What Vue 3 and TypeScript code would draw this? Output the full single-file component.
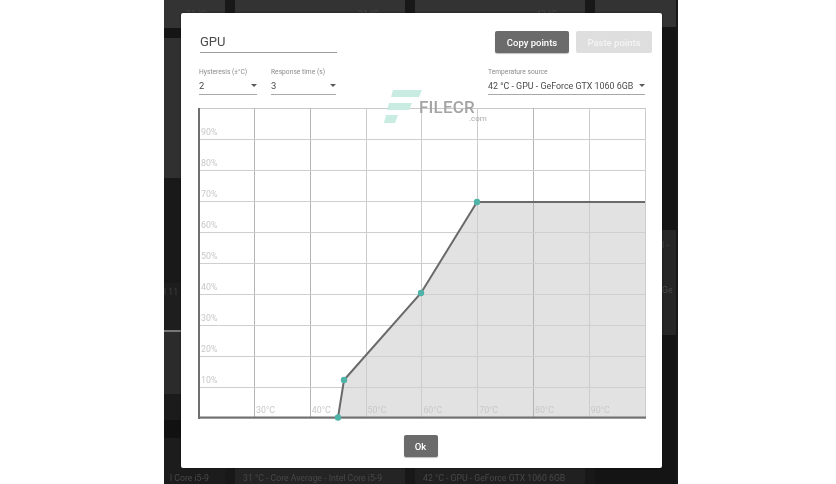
<script setup lang="ts">
interface Band { h: number; c: string; t?: string }
const cols: { w: number; bands: Band[]; cls: string }[] = [
  { w: 61, cls: 'c1', bands: [
    { h: 28, c: '#333333', t: '31 °C' }, { h: 10, c: '#151515' }, { h: 140, c: '#303030' },
    { h: 105, c: '#191919' }, { h: 47, c: '#1e1e1e', t: 'l 11' }, { h: 2, c: '#777777' },
    { h: 62, c: '#2b2b2b' }, { h: 26, c: '#1b1b1b' }, { h: 18, c: '#111111' }, { h: 46, c: '#1c1c1c', t: 'l Core i5-9' }
  ] },
  { w: 170, cls: 'c2', bands: [
    { h: 28, c: '#333333', t: '31 °C' }, { h: 428, c: '#2a2a2a' }, { h: 28, c: '#242424', t: '31 °C - Core Average - Intel Core i5-9' }
  ] },
  { w: 170, cls: 'c3', bands: [
    { h: 28, c: '#333333', t: '42 °C' }, { h: 428, c: '#2a2a2a' }, { h: 28, c: '#202020', t: '42 °C - GPU - GeForce GTX 1060 6GB' }
  ] },
  { w: 81, cls: 'c4', bands: [
    { h: 27, c: '#333333' }, { h: 203, c: '#151515' }, { h: 40, c: '#262626', t: 'l -' }, { h: 65, c: '#262626', t: 'Ge' }, { h: 149, c: '#141414' }
  ] }
]

const fields = [
  { label: 'Hysteresis (±°C)', value: '2', cls: 'f-hyst' },
  { label: 'Response time (s)', value: '3', cls: 'f-resp' }
]

const xs = [56, 112, 168, 223, 279, 335, 391, 447]
const ys = [31, 62, 93, 124, 155, 186, 217, 248, 279]
const darkX = [56, 112, 335]
const yLabels = [90, 80, 70, 60, 50, 40, 30, 20, 10]
const xLabels = [30, 40, 50, 60, 70, 80, 90]
const points: [number, number][] = [[140, 309.5], [146, 272], [223, 185], [279, 94]]
const curve = [...points, [447, 94] as [number, number]]
const linePts = curve.map(p => p.join(',')).join(' ')
const fillPts = linePts + ' 447,309.5'
</script>

<template>
  <div class="page">
    <div class="backdrop">
      <div v-for="col in cols" :key="col.cls" class="col" :class="col.cls" :style="{ width: col.w + 'px' }">
        <div v-for="(b, i) in col.bands" :key="i" class="band" :style="{ height: b.h + 'px', background: b.c }">
          <span v-if="b.t" class="band-text">{{ b.t }}</span>
        </div>
      </div>
    </div>

    <section class="modal">
      <header class="head">
        <div class="title">GPU</div>
        <div class="actions">
          <button class="btn">Copy points</button>
          <button class="btn disabled">Paste points</button>
        </div>
      </header>

      <div class="fields">
        <div v-for="f in fields" :key="f.cls" class="field" :class="f.cls">
          <label>{{ f.label }}</label>
          <div class="select"><span>{{ f.value }}</span><i class="arrow"></i></div>
        </div>
        <div class="field f-temp">
          <label>Temperature source</label>
          <div class="select"><span>42 °C - GPU - GeForce GTX 1060 6GB</span><i class="arrow"></i></div>
        </div>
      </div>

      <svg class="chart" width="448" height="311" viewBox="0 0 448 311">
        <polygon :points="fillPts" fill="#e2e2e2" />
        <rect x="0.5" y="0.5" width="447" height="310" fill="none" stroke="#c9c9c9" />
        <line v-for="x in xs" :key="'x' + x" :x1="x + 0.5" :x2="x + 0.5" y1="0" y2="310"
          :stroke="darkX.includes(x) ? '#b4b4b4' : '#cccccc'" stroke-width="1" />
        <line v-for="y in ys" :key="'y' + y" x1="0" x2="448" :y1="y + 0.5" :y2="y + 0.5" stroke="#cfcfcf" stroke-width="1" />
        <text v-for="(l, i) in yLabels" :key="'yl' + l" x="3" :y="27 + i * 31" class="tick">{{ l }}%</text>
        <text v-for="(l, i) in xLabels" :key="'xl' + l" :x="58 + i * 55.8" y="305" class="tick">{{ l }}°C</text>
        <line x1="1" x2="1" y1="0" y2="311" stroke="#6f6f6f" stroke-width="2" />
        <line x1="0" x2="448" y1="309.5" y2="309.5" stroke="#707070" stroke-width="2" />
        <polyline :points="linePts" fill="none" stroke="#6a6a6a" stroke-width="2" />
        <circle v-for="p in points" :key="p[0]" :cx="p[0]" :cy="p[1]" r="3.2" fill="#4fb3a8" />
      </svg>

      <footer class="foot">
        <button class="btn ok">Ok</button>
      </footer>

      <div class="mark">
        <svg width="40" height="36" viewBox="0 0 40 36" class="mark-icon">
          <polygon points="9,0 38,0 35,7 7,7" fill="#c8ece2" />
          <polygon points="5,13 28,13 25,20 3,20" fill="#c8ece2" />
          <polygon points="2,25 14,25 11,33 0,33" fill="#c8ece2" />
        </svg>
        <span class="mark-name">FILECR</span>
        <span class="mark-dom">.com</span>
      </div>
    </section>
  </div>
</template>

<style scoped>
.page {
  position: relative;
  width: 836px;
  height: 484px;
  overflow: hidden;
  background: #ffffff;
  font-family: Roboto, "Liberation Sans", sans-serif;
  filter: blur(0.35px);
}
.backdrop {
  display: flex;
  gap: 10px;
  width: 514px;
  height: 484px;
  margin-left: 164px;
  background: #181818;
}
.col { display: flex; flex-direction: column; overflow: hidden; flex: none; }
.band { display: flex; align-items: flex-end; overflow: hidden; flex: none; }
.band-text {
  color: #484848;
  font-size: 8.7px;
  line-height: 12px;
  white-space: nowrap;
  padding: 0 0 0 8px;
}
.c1 .band:first-child .band-text { padding: 0 0 8px 22px; }
.c1 .band:nth-child(5) .band-text { padding: 0 0 32px 0; color: #3e3e3e; }
.c1 .band:last-child .band-text { padding: 0 0 0 6px; }
.c2 .band:first-child .band-text { padding: 0 0 8px 123px; }
.c3 .band:first-child .band-text { padding: 0 0 8px 121px; }
.c4 .band:nth-child(3) .band-text { padding: 0 0 19px 67px; color: #4a4a4a; }
.c4 .band:nth-child(4) .band-text { padding: 0 0 39px 67px; color: #4a4a4a; }

.modal {
  position: absolute;
  left: 181px;
  top: 13px;
  width: 481px;
  height: 455px;
  box-sizing: border-box;
  padding: 18px 10px 0 17px;
  background: #ffffff;
  border-radius: 2px;
  box-shadow: 0 0 2px rgba(0, 0, 0, 0.6);
  display: flex;
  flex-direction: column;
}
.head { display: flex; justify-content: space-between; align-items: flex-start; height: 22px; }
.title {
  width: 137px;
  margin-left: 2px;
  height: 21px;
  line-height: 22px;
  font-size: 13px;
  color: #4a4a4a;
  border-bottom: 1px solid #9a9a9a;
}
.actions { display: flex; gap: 7px; }
.btn {
  height: 22px;
  width: 74px;
  padding: 0;
  border: none;
  border-radius: 2px;
  background: #6b6b6b;
  color: #ffffff;
  font-family: inherit;
  font-size: 9.5px;
  font-weight: 500;
  box-shadow: 0 1px 1px rgba(0, 0, 0, 0.25);
}
.btn.disabled { width: 76px; background: #dedede; color: #f4f4f4; box-shadow: none; }

.fields { display: flex; margin-top: 14px; height: 28px; }
.field { display: flex; flex-direction: column; }
.f-hyst { width: 58px; margin-left: 1px; }
.f-resp { width: 65px; margin-left: 14px; }
.f-temp { width: 157px; margin-left: 152px; }
.f-temp .select { font-size: 8.9px; }
.field label { font-size: 6.7px; line-height: 10px; color: #8c8c8c; white-space: nowrap; }
.select {
  display: flex;
  justify-content: space-between;
  align-items: center;
  height: 18px;
  box-sizing: border-box;
  font-size: 9.4px;
  color: #4a4a4a;
  border-bottom: 1px solid #a8a8a8;
  white-space: nowrap;
}
.arrow {
  width: 0;
  height: 0;
  border-left: 3px solid transparent;
  border-right: 3px solid transparent;
  border-top: 3px solid #5a5a5a;
}

.chart { display: block; margin-top: 13px; flex: none; overflow: visible; }
.tick { font-size: 8.8px; fill: #c8c8c8; font-family: Roboto, "Liberation Sans", sans-serif; }

.foot { display: flex; justify-content: center; margin-top: 16px; padding-right: 9px; }
.btn.ok { width: 34px; }

.mark { position: absolute; left: 203px; top: 77px; width: 110px; height: 40px; pointer-events: none; }
.mark-icon { position: absolute; left: 0; top: 0; }
.mark-name {
  position: absolute;
  left: 35px;
  top: 10px;
  font-size: 17px;
  line-height: 14px;
  font-weight: 500;
  color: #a4a4a4;
  letter-spacing: 0.2px;
}
.mark-dom { position: absolute; left: 85px; top: 24px; font-size: 8px; line-height: 10px; color: #aaaaaa; }
</style>
